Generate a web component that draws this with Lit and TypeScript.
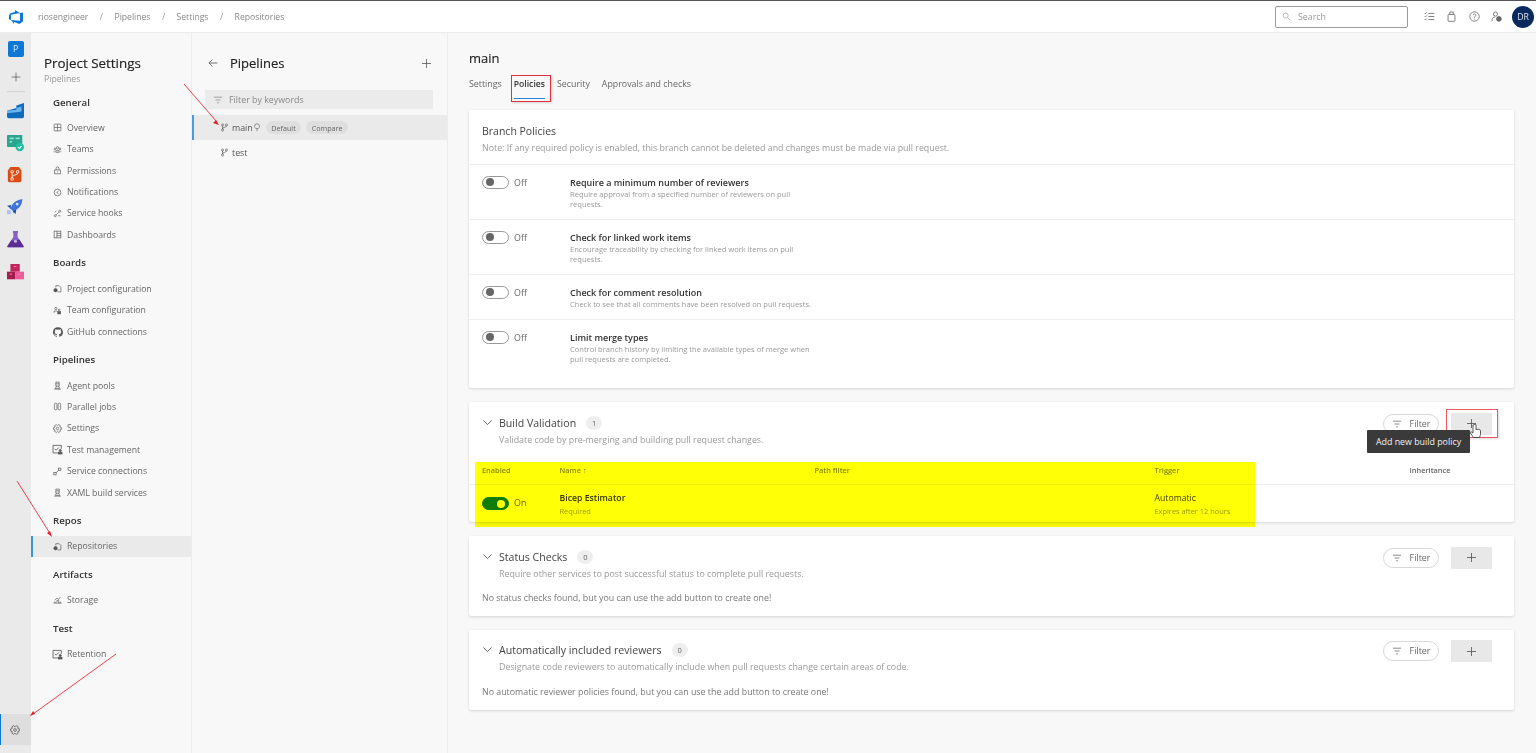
import { LitElement, html, css, svg } from "lit";
import { customElement } from "lit/decorators.js";

const ic = (body: unknown, size = 10) =>
  html`<svg class="ic" width=${size} height=${size} viewBox="0 0 16 16" fill="none" stroke="currentColor" stroke-width="1.2">${body}</svg>`;

const gearPath = () => {
  const pts: string[] = [];
  for (let k = 0; k < 6; k++) {
    const a = (k * Math.PI) / 3;
    for (const [r, d] of [[5.2, -0.5], [7.2, -0.24], [7.2, 0.24], [5.2, 0.5]] as const) {
      pts.push(`${(8 + r * Math.cos(a + d)).toFixed(2)} ${(8 + r * Math.sin(a + d)).toFixed(2)}`);
    }
  }
  return `M${pts.join("L")}z`;
};

const I: Record<string, unknown> = {
  overview: svg`<rect x="2" y="2" width="12" height="12" rx="1"/><path d="M8 2v12M2 8h12"/>`,
  teams: svg`<circle cx="8" cy="5" r="2"/><circle cx="3.5" cy="7" r="1.5"/><circle cx="12.5" cy="7" r="1.5"/><path d="M5 13v-3h6v3zM2 13v-2M14 13v-2"/>`,
  lock: svg`<rect x="3" y="7" width="10" height="7"/><path d="M5.500 7V4a2.500 2.500 0 0 1 5 0v3M7 10.500h2"/>`,
  notif: svg`<circle cx="8" cy="8" r="6"/><path d="M10 5.500L6.500 8 10 10.500"/>`,
  hook: svg`<circle cx="4" cy="12" r="1.800"/><circle cx="12" cy="4" r="1.800"/><path d="M5.500 10.500l5-5M9 12h4M3 6l3-3"/>`,
  dash: svg`<rect x="2" y="2" width="12" height="12"/><path d="M7 2v12M7 6h7M7 10h7"/>`,
  project: svg`<path d="M5 6V3h6l3 3v8H8"/><circle cx="4.500" cy="11" r="3" fill="currentColor"/>`,
  team: svg`<circle cx="5" cy="4.500" r="2"/><path d="M2 12V9h6"/><circle cx="11" cy="7" r="1.500"/><rect x="8.500" y="10" width="5" height="4" fill="currentColor"/>`,
  agent: svg`<path d="M5 2h6v7H5zM5 5h6M6.500 9L4 13h8L9.500 9M2 14.500h12"/>`,
  parallel: svg`<rect x="2.500" y="2" width="4.500" height="12" rx="2.200"/><rect x="9" y="2" width="4.500" height="12" rx="2.200"/>`,
  gear: svg`<circle cx="8" cy="8" r="2.200"/><path d=${gearPath()}/>`,
  test: svg`<path d="M9 13H1.500V2h12v5M4 7l2 2 4-4"/><circle cx="12" cy="9.500" r="1.500" fill="currentColor"/><rect x="9.500" y="12" width="5" height="2.500" fill="currentColor"/>`,
  service: svg`<rect x="1.500" y="10" width="4" height="4"/><rect x="10" y="2" width="4" height="4"/><path d="M5.500 10L10 6"/>`,
  storage: svg`<path d="M2 14v-3h3v3M7 14V8h3v6M12 14v-3h2v3M3 7l4-3 3 2 3-4"/>`,
  branch: svg`<circle cx="4.500" cy="3.500" r="1.800"/><circle cx="4.500" cy="12.500" r="1.800"/><circle cx="11.500" cy="3.500" r="1.800"/><path d="M4.500 5.300v5.400M11.500 5.300c0 3-7 2-7 5"/>`,
  filter: svg`<path d="M1.500 3.500h13M4 8h8M6.500 12.500h3"/>`,
  bulb: svg`<path d="M5.500 11C4 9.800 3 8.500 3 6.500a5 5 0 0 1 10 0c0 2-1 3.300-2.500 4.500zM6 14h4"/>`,
  search: svg`<circle cx="6.500" cy="6.500" r="4.500"/><path d="M10 10l4.500 4.500"/>`,
  list: svg`<path d="M6.500 3.500H15M6.500 8H15M6.500 12.500H15M1 3l1 1 2-2M1 7.500l1 1 2-2M1 12l1 1 2-2"/>`,
  bag: svg`<rect x="3" y="5" width="10" height="10" rx="1"/><path d="M5.500 5V1.500h5V5"/>`,
  help: svg`<circle cx="8" cy="8" r="6.800"/><path d="M6 6.200a2 2 0 1 1 3 1.800c-.7.400-1 .800-1 1.600M8 11.200v1.200"/>`,
  user: svg`<circle cx="6.500" cy="4.500" r="3"/><path d="M1.500 14.500v-2c0-2 2-3.500 4-3.500"/><circle cx="11.500" cy="11.500" r="3.500" fill="currentColor"/>`,
  github: svg`<path fill="currentColor" stroke="none" d="M8 .2a8 8 0 0 0-2.500 15.600c.4.100.5-.2.5-.4v-1.400c-2.200.5-2.700-1-2.700-1-.4-.9-.9-1.200-.9-1.200-.7-.5.100-.5.100-.5.800.1 1.200.8 1.200.8.700 1.200 1.900.9 2.300.7.100-.5.300-.9.500-1.100-1.800-.2-3.600-.9-3.600-4 0-.9.300-1.600.8-2.100-.1-.2-.4-1 .1-2.100 0 0 .7-.2 2.200.8a7.600 7.600 0 0 1 4 0c1.500-1 2.200-.8 2.200-.8.500 1.100.2 1.900.1 2.100.5.600.8 1.300.8 2.100 0 3.100-1.900 3.700-3.700 3.900.3.300.6.800.6 1.500v2.200c0 .2.100.5.600.4A8 8 0 0 0 8 .2z"/>`,
};

const NAV: { head: string; items: [string, string, boolean?][] }[] = [
  { head: "General", items: [["overview", "Overview"], ["teams", "Teams"], ["lock", "Permissions"], ["notif", "Notifications"], ["hook", "Service hooks"], ["dash", "Dashboards"]] },
  { head: "Boards", items: [["project", "Project configuration"], ["team", "Team configuration"], ["github", "GitHub connections"]] },
  { head: "Pipelines", items: [["agent", "Agent pools"], ["parallel", "Parallel jobs"], ["gear", "Settings"], ["test", "Test management"], ["service", "Service connections"], ["agent", "XAML build services"]] },
  { head: "Repos", items: [["project", "Repositories", true]] },
  { head: "Artifacts", items: [["storage", "Storage"]] },
  { head: "Test", items: [["test", "Retention"]] },
];

const POLICIES = [
  ["Require a minimum number of reviewers", "Require approval from a specified number of reviewers on pull requests.", "p2"],
  ["Check for linked work items", "Encourage traceability by checking for linked work items on pull requests.", "p2"],
  ["Check for comment resolution", "Check to see that all comments have been resolved on pull requests.", "p1"],
  ["Limit merge types", "Control branch history by limiting the available types of merge when pull requests are completed.", "p3"],
];

const railIcons = [
  svg`<path fill="#0f6cbd" d="M0 9l11-3V3l9-3v16a2 2 0 0 1-2 2H2a2 2 0 0 1-2-2z"/><path fill="#6cb4ee" d="M11 6l6-2v6l-6 1zM0 9l11-1v3L0 12z"/>`,
  svg`<rect y="0" width="18" height="14" rx="1" fill="#2aa58d"/><path fill="#8fdcc8" d="M3 3h5v2H3zM10 3h5v2h-5zM3 7h3v2H3z"/><circle cx="15" cy="14" r="5" fill="#1fc0a0"/><path d="M12.700 14l1.700 1.700 3-3" stroke="#fff" stroke-width="1.300" fill="none"/>`,
  svg`<path fill="#dc4a16" d="M3 0h10l3 4v12a2 2 0 0 1-2 2H2a2 2 0 0 1-2-2V4z" transform="translate(1 0)"/><g stroke="#ffd9c8" stroke-width="1.200" fill="none"><circle cx="6" cy="14" r="1.500"/><circle cx="6" cy="5.500" r="1.500"/><circle cx="12.500" cy="5.500" r="1.500"/><path d="M6 7v5.500M12.500 7c0 3-6.500 2-6.500 5"/></g>`,
  svg`<path fill="#3f74d9" d="M5 9c2-5 7-8 13-9 0 6-3 11-8 13l-2 4-1.500-3.500L3 11z"/><path fill="#1f4fb0" d="M0 8l5-1-1 4zM7 14l4-2-1 6z"/><path fill="#a8c6f5" d="M0 13h4l1 5H0z"/><circle cx="12" cy="6" r="1.700" fill="#cfe0fb"/>`,
  svg`<path fill="#8661c5" d="M7 0h6v2l-.5 0v5l6.500 10a1 1 0 0 1-1 2H2a1 1 0 0 1-1-2l6.500-10V2L7 2z"/><path fill="#5c2d91" d="M1 17l4-6c3 1 6 0 9.500-1l4.500 7a1 1 0 0 1-1 2H2a1 1 0 0 1-1-2z"/><circle cx="10" cy="12" r="1.800" fill="#c9b3ea"/>`,
  svg`<rect x="4" y="0" width="11" height="9" fill="#c2255c"/><rect x="0" y="9" width="10" height="9" fill="#a61e4d"/><rect x="10" y="9" width="10" height="9" fill="#ea5b9a"/><path stroke="#f48db8" d="M8 3h3M3 12h3M13 12h3"/>`,
];

const segment = (title: string, count: number, desc: string) => html`
  <div class="seg-head">
    <svg class="chev" width="11" height="11" viewBox="0 0 16 16" fill="none" stroke="currentColor" stroke-width="1.300"><path d="M2 5l6 6 6-6"/></svg>
    <div class="seg-text">
      <div class="seg-title"><span>${title}</span><span class="count">${count}</span></div>
      <div class="seg-desc">${desc}</div>
    </div>
    <div class="seg-actions">
      <span class="filter-btn">${ic(I.filter)}<span>Filter</span></span>
      <span class="add-btn"><svg width="9" height="9" viewBox="0 0 16 16" stroke="currentColor" stroke-width="1.500"><path d="M8 0v16M0 8h16"/></svg></span>
    </div>
  </div>`;

@customElement("app-root")
export class AppRoot extends LitElement {
  static styles = css`
    :host { display: block; width: 1536px; height: 753px; position: relative; overflow: hidden; font-family: "Open Sans", "Noto Sans", sans-serif; font-size: 8.85px; color: #555; background: #f8f8f8; }
    * { box-sizing: border-box; }
    .ic { flex: none; }
    .top { height: 33px; background: #fff; border-top: 1px solid #555; border-bottom: 1px solid #ececec; display: flex; align-items: center; padding-right: 2px; }
    .logo { width: 31px; display: flex; justify-content: center; }
    .crumbs { display: flex; gap: 11.5px; margin-left: 7px; color: #888; font-size: 8.6px; }
    .crumbs i { font-style: normal; color: #999; }
    .spacer { flex: 1; }
    .search { width: 133px; height: 22px; border: 1px solid #9a9a9a; border-radius: 2px; display: flex; align-items: center; gap: 7px; padding-left: 6px; color: #999; }
    .top-icons { display: flex; align-items: center; gap: 11.5px; margin-left: 15.5px; color: #666; }
    .avatar { width: 22px; height: 22px; border-radius: 50%; background: #0a2a5e; color: #dde4f0; display: flex; align-items: center; justify-content: center; font-size: 8.7px; margin-left: -1.5px; }
    .body { display: flex; height: 720px; }
    .rail { width: 31px; background: #eaeaea; display: flex; flex-direction: column; align-items: center; flex: none; }
    .p { width: 16px; height: 16px; margin-top: 8px; border-radius: 2px; background: #0f78d4; color: #dbeeff; font-size: 8.7px; display: flex; align-items: center; justify-content: center; }
    .rail-plus { margin-top: 15px; color: #555; height: 10px; display: flex; }
    .rail hr { width: 18px; border: 0; border-top: 1px solid #d2d2d2; margin: 9px 0 0; }
    .rail-icon { display: flex; height: 32.2px; align-items: center; }
    .rail-icons { margin-top: 3px; display: flex; flex-direction: column; }
    .rail-fill { flex: 1; }
    .rail-gear { align-self: stretch; height: 31px; margin-bottom: 8px; background: #dedede; border-left: 1px solid #0f78d4; display: flex; align-items: center; justify-content: center; color: #555; padding-right: 3px; }
    .nav { width: 161px; flex: none; background: #f8f8f8; border-right: 1px solid #ececec; }
    .nav h1 { margin: 21px 0 0 13px; font-size: 13.4px; font-weight: 400; color: #222; line-height: 18.5px; -webkit-text-stroke: .15px #222; }
    .nav .sub { margin-left: 13px; color: #999; line-height: 12px; font-size: 8.7px; }
    .groups { margin-top: 5.5px; }
    .ghead { padding-left: 22px; height: 24px; margin-top: 5.4px; margin-bottom: 3.2px; display: flex; align-items: center; font-size: 9.7px; font-weight: 600; color: #333; }
    .item { height: 21.4px; display: flex; align-items: center; gap: 5px; padding-left: 22px; color: #666; font-size: 8.7px; }
    .item.sel { background: #eaeaea; border-left: 2px solid #3a94e0; padding-left: 20px; }
    .iw { width: 9px; height: 9px; display: flex; align-items: center; justify-content: center; flex: none; color: #555; }
    .panel { width: 256px; flex: none; border-right: 1px solid #ececec; background: #f8f8f8; }
    .panel-head { height: 52px; display: flex; align-items: center; padding: 0 16px 2px; margin-top: 5px; }
    .panel-head .t { margin-left: 12px; font-size: 13px; color: #222; flex: 1; -webkit-text-stroke: .15px #222; }
    .panel-head svg { color: #555; }
    .kw { margin: 0 14px 0 13px; height: 19px; background: #ebebeb; display: flex; align-items: center; gap: 6px; padding-left: 8px; color: #888; }
    .branch { height: 25px; display: flex; align-items: center; padding-left: 28px; gap: 3px; color: #555; }
    .branch.sel { background: #eaeaea; border-left: 2px solid #4a9ae0; padding-left: 26px; margin-top: 6px; }
    .branch .bulb { margin-left: -3px; }
    .pill { height: 13px; border-radius: 7px; background: #dfdfdf; padding: 0 5.5px; display: inline-flex; align-items: center; font-size: 7.2px; color: #666; margin-left: 2px; }
    .main { flex: 1; padding: 0 22px 0 21px; min-width: 0; }
    .main h2 { margin: 16px 0 0; font-size: 13px; font-weight: 400; color: #222; line-height: 19px; -webkit-text-stroke: .12px #222; }
    .tabs { display: flex; gap: 12px; margin-top: 6px; height: 26px; color: #666; align-items: flex-start; padding-top: 2px; }
    .tabs span { line-height: 16px; padding-bottom: 6px; }
    .tabs .on { color: #333; font-weight: 600; border-bottom: 1.5px solid #1e88d8; font-size: 8.6px; }
    .card { background: #fff; border-radius: 2px; box-shadow: 0 1px 3px rgba(0,0,0,.14); margin-bottom: 14px; }
    .bp { margin-top: 10px; height: 278px; }
    .bp-head { padding: 14px 13px 0; height: 54.5px; border-bottom: 1px solid #eee; }
    .bp-title { font-size: 10.5px; color: #444; line-height: 15px; }
    .bp-note { color: #999; line-height: 14px; margin-top: 1.5px; }
    .row { display: flex; padding: 11px 13px 0; border-bottom: 1px solid #eee; height: 55px; }
    .row:last-child { border-bottom: 0; }
    .row.p1 { height: 45px; }
    .row.p3 { height: 68px; }
    .toggle { width: 27px; height: 13px; border: 1px solid #999; border-radius: 7px; display: flex; align-items: center; padding-left: 3px; flex: none; background: #fff; }
    .toggle b { width: 8px; height: 8px; border-radius: 50%; background: #666; }
    .toggle.on { background: #107c10; border-color: #107c10; justify-content: flex-end; padding: 0 3px 0 0; }
    .toggle.on b { background: #fff; }
    .state { margin-left: 5px; width: 56px; color: #666; line-height: 13px; flex: none; }
    .row .state { margin-top: 1px; }
    .ptext { width: 245px; }
    .ptitle { font-weight: 600; color: #333; line-height: 14px; font-size: 9px; }
    .pdesc { color: #999; font-size: 7.55px; line-height: 10.7px; margin-top: -0.8px; }
    .bv { height: 120px; }
    .s3 { height: 79.5px; }
    .s4 { height: 80px; margin-bottom: 0; }
    .seg-head { display: flex; padding: 13.5px 22px 0 13px; height: 52px; }
    .chev { color: #555; margin-top: 1px; flex: none; }
    .seg-text { margin-left: 6px; flex: 1; }
    .seg-title { display: flex; align-items: center; gap: 10px; font-size: 10.6px; color: #444; line-height: 14px; }
    .count { width: 16px; height: 14px; border-radius: 50%; background: #eee; font-size: 7.5px; display: flex; align-items: center; justify-content: center; color: #666; }
    .seg-desc { color: #999; line-height: 14px; margin-top: 3px; }
    .seg-actions { display: flex; gap: 12px; align-items: flex-start; }
    .filter-btn { width: 56px; height: 20px; margin-top: -2px; border: 1px solid #d8d8d8; border-radius: 10px; display: flex; align-items: center; justify-content: center; gap: 8px; color: #666; }
    .add-btn { width: 41px; height: 22px; margin-top: -3px; background: #e8e8e8; display: flex; align-items: center; justify-content: center; color: #555; }
    .empty { padding: 4px 0 0 13px; color: #777; }
    .thead, .tbody { display: grid; grid-template-columns: 77.5px 255px 340px 255px 1fr; padding-left: 13px; }
    .thead { height: 31px; padding-top: 1px; align-items: center; border-bottom: 1px solid #eee; font-size: 7.4px; font-weight: 600; color: #888; }
    .thead .inh { color: #666; }
    .tbody { height: 37px; align-items: center; }
    .on-cell { display: flex; align-items: center; }
    .on-cell .state { width: auto; }
    .nm { color: #333; font-weight: 600; line-height: 14px; font-size: 8.7px; margin-top: 1px; }
    .sb { color: #999; font-size: 7.4px; line-height: 12px; }
    .tg { color: #444; line-height: 14px; font-size: 8.7px; margin-top: 1px; }
    .overlay { position: absolute; inset: 0; pointer-events: none; }
    .yellow { position: absolute; left: 475px; top: 462px; width: 780px; height: 64.5px; background: rgba(255,255,0,.98); mix-blend-mode: multiply; }
    .rbox { position: absolute; border: 1.5px solid #e0303a; box-shadow: 1px 1px 2px rgba(0,0,0,.15); }
    .rbox.a { left: 510.5px; top: 74.5px; width: 40px; height: 27px; }
    .rbox.b { left: 1446px; top: 409px; width: 51.5px; height: 29px; border-color: #ee5a64; }
    .tip { position: absolute; left: 1367px; top: 430px; width: 103px; height: 23px; background: #3a3a3a; color: #f2f2f2; border-radius: 1px; display: flex; align-items: center; justify-content: center; }
    .arrows { position: absolute; inset: 0; }
  `;

  render() {
    return html`
      <div class="top">
        <div class="logo"><svg width="16" height="16" viewBox="0 0 16 16"><path fill="#0f78d4" d="M15 3.622v8.512L11.500 15l-5.425-1.975v1.958L3.004 10.970l8.951.7V4.005L15 3.622zm-2.984.428L6.994 1v2.001L2.382 4.356 1 6.130v4.029l1.978.873V5.869l9.038-1.819z"/></svg></div>
        <div class="crumbs"><span>riosengineer</span><i>/</i><span>Pipelines</span><i>/</i><span>Settings</span><i>/</i><span>Repositories</span></div>
        <div class="spacer"></div>
        <div class="search">${ic(I.search, 9)}<span>Search</span></div>
        <div class="top-icons">${ic(I.list, 11)}${ic(I.bag, 11)}${ic(I.help, 11)}${ic(I.user, 11)}<div class="avatar">DR</div></div>
      </div>
      <div class="body">
        <div class="rail">
          <div class="p">P</div>
          <div class="rail-plus">${ic(svg`<path d="M8 1v14M1 8h14"/>`, 10)}</div>
          <hr />
          <div class="rail-icons">
            ${railIcons.map((b) => html`<div class="rail-icon"><svg width="17" height="17" viewBox="0 0 20 20">${b}</svg></div>`)}
          </div>
          <div class="rail-fill"></div>
          <div class="rail-gear">${ic(I.gear, 10)}</div>
        </div>
        <div class="nav">
          <h1>Project Settings</h1>
          <div class="sub">Pipelines</div>
          <div class="groups">
            ${NAV.map((g) => html`
              <div class="ghead">${g.head}</div>
              ${g.items.map(([i, t, sel]) => html`<div class="item ${sel ? "sel" : ""}"><span class="iw">${ic(I[i], i === "test" ? 11 : i === "github" ? 10 : 9)}</span><span>${t}</span></div>`)}
            `)}
          </div>
        </div>
        <div class="panel">
          <div class="panel-head">
            <svg width="10" height="10" viewBox="0 0 16 16" fill="none" stroke="currentColor" stroke-width="1.300"><path d="M15 8H1.500M7 2.500L1.500 8 7 13.500"/></svg>
            <span class="t">Pipelines</span>
            <svg width="9" height="9" viewBox="0 0 16 16" stroke="currentColor" stroke-width="1.400"><path d="M8 0v16M0 8h16"/></svg>
          </div>
          <div class="kw">${ic(I.filter)}<span>Filter by keywords</span></div>
          <div class="branch sel">${ic(I.branch, 9)}<span>main</span><span class="bulb">${ic(I.bulb, 8)}</span><span class="pill">Default</span><span class="pill">Compare</span></div>
          <div class="branch">${ic(I.branch, 9)}<span>test</span></div>
        </div>
        <div class="main">
          <h2>main</h2>
          <div class="tabs"><span>Settings</span><span class="on">Policies</span><span>Security</span><span>Approvals and checks</span></div>
          <div class="card bp">
            <div class="bp-head">
              <div class="bp-title">Branch Policies</div>
              <div class="bp-note">Note: If any required policy is enabled, this branch cannot be deleted and changes must be made via pull request.</div>
            </div>
            ${POLICIES.map(([t, d, c]) => html`
              <div class="row ${c}">
                <div class="toggle"><b></b></div><div class="state">Off</div>
                <div class="ptext"><div class="ptitle">${t}</div><div class="pdesc">${d}</div></div>
              </div>`)}
          </div>
          <div class="card bv">
            ${segment("Build Validation", 1, "Validate code by pre-merging and building pull request changes.")}
            <div class="thead"><span>Enabled</span><span>Name ↑</span><span>Path filter</span><span>Trigger</span><span class="inh">Inheritance</span></div>
            <div class="tbody">
              <div class="on-cell"><div class="toggle on"><b></b></div><div class="state">On</div></div>
              <div><div class="nm">Bicep Estimator</div><div class="sb">Required</div></div>
              <div></div>
              <div><div class="tg">Automatic</div><div class="sb">Expires after 12 hours</div></div>
            </div>
          </div>
          <div class="card s3">
            ${segment("Status Checks", 0, "Require other services to post successful status to complete pull requests.")}
            <div class="empty">No status checks found, but you can use the add button to create one!</div>
          </div>
          <div class="card s4">
            ${segment("Automatically included reviewers", 0, "Designate code reviewers to automatically include when pull requests change certain areas of code.")}
            <div class="empty">No automatic reviewer policies found, but you can use the add button to create one!</div>
          </div>
        </div>
      </div>
      <div class="overlay">
        <div class="yellow"></div>
        <div class="rbox a"></div>
        <div class="rbox b"></div>
        <div class="tip">Add new build policy</div>
        <svg class="arrows" width="1536" height="753" viewBox="0 0 1536 753" fill="none" stroke="#e8404a" stroke-width="1">
          <path d="M184 84L217 122M17 481L51 535M116 654L33 714"/>
          <path fill="#e8202a" stroke="none" d="M219 125l-6-2 3-3zM52 537l-5-4 3-2zM30 716l3-5 2 3z"/>
          <path fill="#fff" stroke="#333" stroke-width=".8" d="M1473 425v8l-1.500-1c-1-.5-1.500.5-1 1l3 4.500h6l1-3v-4c0-1-1.500-1-1.500-.5 0-1-1.500-1-1.500-.3 0-.8-1.500-.8-1.500 0V425c0-1-2-1-2 0z"/>
        </svg>
      </div>
    `;
  }
}
